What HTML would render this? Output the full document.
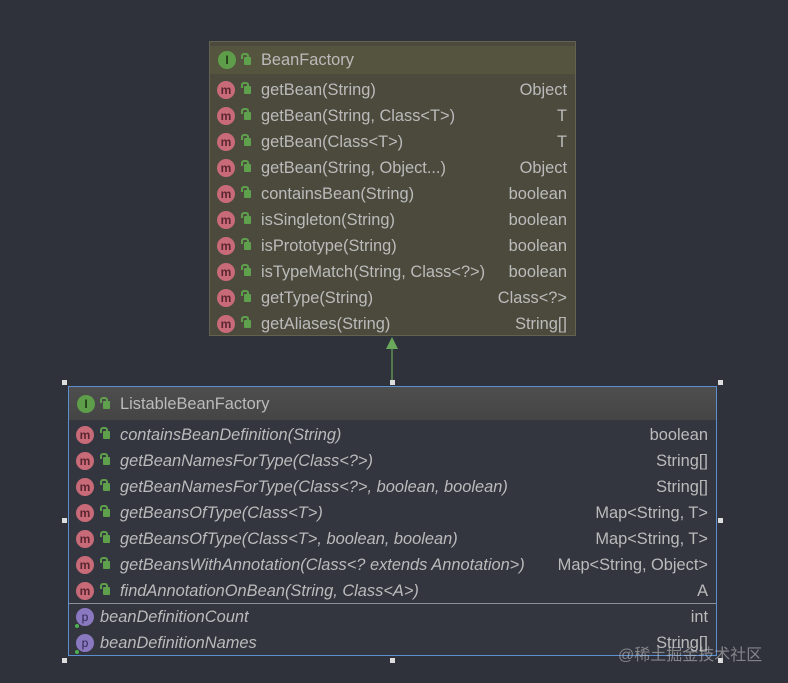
<!DOCTYPE html>
<html><head><meta charset="utf-8"><style>
body{margin:0;width:788px;height:683px;background:#2f313b;position:relative;overflow:hidden;font-family:"Liberation Sans","DejaVu Sans",sans-serif;font-size:16.4px;color:#bbbbbb}
.box{position:absolute;box-sizing:border-box}
.row{position:absolute;left:0;right:0;height:26px;line-height:26px}
.ic{position:absolute;top:4px;width:18px;height:18px;border-radius:50%;font-size:12px;line-height:18px;text-align:center;font-weight:bold;font-style:normal}
.m{background:#c86a78;color:#5a2630}
.i{background:#5e9e4a;color:#1f3a14}
.p{background:#8a78c0;color:#2e2650}
.lk{position:absolute;top:9px;width:7px;height:8px;background:#5fa04c;border-radius:1px}
.lk:before{content:"";position:absolute;left:-3px;top:-4px;width:4px;height:4px;border:2px solid #5fa04c;border-bottom:none;border-radius:3px 3px 0 0}
.nm{position:absolute}
.ty{position:absolute;right:8px}
.h{position:absolute;width:5px;height:5px;background:#ddd}
.it .nm{font-style:italic}
</style></head><body>
<div class="box" style="left:209px;top:41px;width:367px;height:295px;background:#4b4a3d;border:1px solid #62624f">
 <div class="row" style="top:4px;height:28px;background:#55543f">
  <div class="ic i" style="left:8px;top:5px">I</div><div class="lk" style="left:34px;top:11px"></div><div class="nm" style="left:51px;top:1px">BeanFactory</div>
 </div>
 <div style="position:absolute;left:0;right:0;top:35px">
  <div class="row" style="top:0"><div class="ic m" style="left:7px">m</div><div class="lk" style="left:34px"></div><div class="nm" style="left:51px">getBean(String)</div><div class="ty">Object</div></div>
  <div class="row" style="top:26px"><div class="ic m" style="left:7px">m</div><div class="lk" style="left:34px"></div><div class="nm" style="left:51px">getBean(String, Class&lt;T&gt;)</div><div class="ty">T</div></div>
  <div class="row" style="top:52px"><div class="ic m" style="left:7px">m</div><div class="lk" style="left:34px"></div><div class="nm" style="left:51px">getBean(Class&lt;T&gt;)</div><div class="ty">T</div></div>
  <div class="row" style="top:78px"><div class="ic m" style="left:7px">m</div><div class="lk" style="left:34px"></div><div class="nm" style="left:51px">getBean(String, Object...)</div><div class="ty">Object</div></div>
  <div class="row" style="top:104px"><div class="ic m" style="left:7px">m</div><div class="lk" style="left:34px"></div><div class="nm" style="left:51px">containsBean(String)</div><div class="ty">boolean</div></div>
  <div class="row" style="top:130px"><div class="ic m" style="left:7px">m</div><div class="lk" style="left:34px"></div><div class="nm" style="left:51px">isSingleton(String)</div><div class="ty">boolean</div></div>
  <div class="row" style="top:156px"><div class="ic m" style="left:7px">m</div><div class="lk" style="left:34px"></div><div class="nm" style="left:51px">isPrototype(String)</div><div class="ty">boolean</div></div>
  <div class="row" style="top:182px"><div class="ic m" style="left:7px">m</div><div class="lk" style="left:34px"></div><div class="nm" style="left:51px">isTypeMatch(String, Class&lt;?&gt;)</div><div class="ty">boolean</div></div>
  <div class="row" style="top:208px"><div class="ic m" style="left:7px">m</div><div class="lk" style="left:34px"></div><div class="nm" style="left:51px">getType(String)</div><div class="ty">Class&lt;?&gt;</div></div>
  <div class="row" style="top:234px"><div class="ic m" style="left:7px">m</div><div class="lk" style="left:34px"></div><div class="nm" style="left:51px">getAliases(String)</div><div class="ty">String[]</div></div>
 </div>
</div>
<svg style="position:absolute;left:382px;top:334px" width="20" height="52"><line x1="10" y1="12" x2="10" y2="50" stroke="#6aa85a" stroke-width="1.2"/><polygon points="4,15 16,15 10,3" fill="#6aa85a"/></svg>
<div class="box it" style="left:68px;top:386px;width:649px;height:270px;background:#33353f;border:1px solid #5c8fcf">
 <div class="row" style="top:0;height:33px;background:linear-gradient(#4e4e4e,#454545)">
  <div class="ic i" style="left:8px;top:8px">I</div><div class="lk" style="left:34px;top:14px"></div><div class="nm" style="left:51px;top:4px;font-style:normal">ListableBeanFactory</div>
 </div>
 <div style="position:absolute;left:0;right:0;top:35px">
  <div class="row" style="top:0"><div class="ic m" style="left:7px">m</div><div class="lk" style="left:34px"></div><div class="nm" style="left:51px">containsBeanDefinition(String)</div><div class="ty">boolean</div></div>
  <div class="row" style="top:26px"><div class="ic m" style="left:7px">m</div><div class="lk" style="left:34px"></div><div class="nm" style="left:51px">getBeanNamesForType(Class&lt;?&gt;)</div><div class="ty">String[]</div></div>
  <div class="row" style="top:52px"><div class="ic m" style="left:7px">m</div><div class="lk" style="left:34px"></div><div class="nm" style="left:51px">getBeanNamesForType(Class&lt;?&gt;, boolean, boolean)</div><div class="ty">String[]</div></div>
  <div class="row" style="top:78px"><div class="ic m" style="left:7px">m</div><div class="lk" style="left:34px"></div><div class="nm" style="left:51px">getBeansOfType(Class&lt;T&gt;)</div><div class="ty">Map&lt;String, T&gt;</div></div>
  <div class="row" style="top:104px"><div class="ic m" style="left:7px">m</div><div class="lk" style="left:34px"></div><div class="nm" style="left:51px">getBeansOfType(Class&lt;T&gt;, boolean, boolean)</div><div class="ty">Map&lt;String, T&gt;</div></div>
  <div class="row" style="top:130px"><div class="ic m" style="left:7px">m</div><div class="lk" style="left:34px"></div><div class="nm" style="left:51px">getBeansWithAnnotation(Class&lt;? extends Annotation&gt;)</div><div class="ty">Map&lt;String, Object&gt;</div></div>
  <div class="row" style="top:156px"><div class="ic m" style="left:7px">m</div><div class="lk" style="left:34px"></div><div class="nm" style="left:51px">findAnnotationOnBean(String, Class&lt;A&gt;)</div><div class="ty">A</div></div>
  <div style="position:absolute;left:0;right:0;top:181px;height:1px;background:#8a8f99"></div>
  <div class="row" style="top:182px"><div class="ic p" style="left:7px;font-weight:normal">p</div><div style="position:absolute;left:6px;top:20px;width:4px;height:4px;border-radius:50%;background:#4caf50"></div><div class="nm" style="left:31px">beanDefinitionCount</div><div class="ty">int</div></div>
  <div class="row" style="top:208px"><div class="ic p" style="left:7px;font-weight:normal">p</div><div style="position:absolute;left:6px;top:20px;width:4px;height:4px;border-radius:50%;background:#4caf50"></div><div class="nm" style="left:31px">beanDefinitionNames</div><div class="ty">String[]</div></div>
 </div>
</div>
<div class="h" style="left:62px;top:380px"></div><div class="h" style="left:390px;top:380px"></div><div class="h" style="left:718px;top:380px"></div>
<div class="h" style="left:62px;top:518px"></div><div class="h" style="left:718px;top:518px"></div>
<div class="h" style="left:62px;top:658px"></div><div class="h" style="left:390px;top:658px"></div><div class="h" style="left:718px;top:658px"></div>
<div style="position:absolute;left:618px;top:641px;font-size:16px;color:rgba(200,200,200,0.55);font-family:'Liberation Sans','Noto Sans CJK SC',sans-serif">@稀土掘金技术社区</div>
</body></html>
